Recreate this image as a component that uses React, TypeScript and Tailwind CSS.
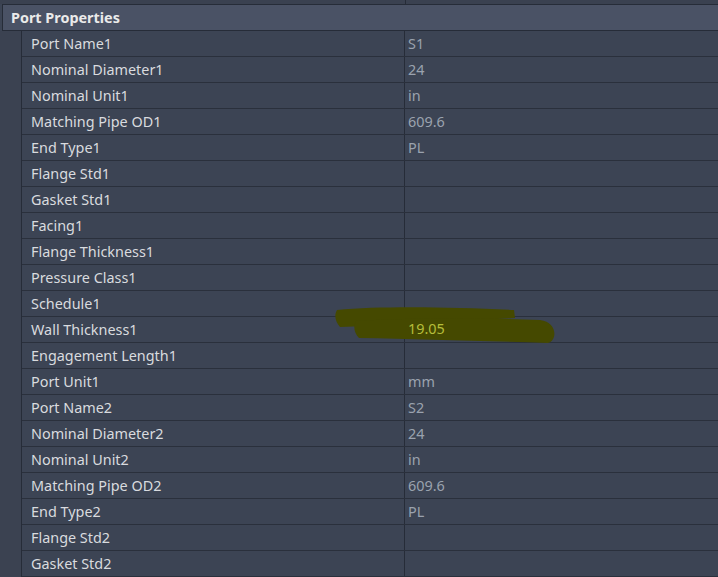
import React from "react";

const rows: [string, string][] = [
  ["Port Name1", "S1"],
  ["Nominal Diameter1", "24"],
  ["Nominal Unit1", "in"],
  ["Matching Pipe OD1", "609.6"],
  ["End Type1", "PL"],
  ["Flange Std1", ""],
  ["Gasket Std1", ""],
  ["Facing1", ""],
  ["Flange Thickness1", ""],
  ["Pressure Class1", ""],
  ["Schedule1", ""],
  ["Wall Thickness1", ""],
  ["Engagement Length1", ""],
  ["Port Unit1", "mm"],
  ["Port Name2", "S2"],
  ["Nominal Diameter2", "24"],
  ["Nominal Unit2", "in"],
  ["Matching Pipe OD2", "609.6"],
  ["End Type2", "PL"],
  ["Flange Std2", ""],
  ["Gasket Std2", ""],
];

export default function App() {
  return (
    <div
      className="relative w-[718px] h-[577px] overflow-hidden bg-[#3c4454] text-[14.4px]"
      style={{ fontFamily: '"Segoe UI", "Noto Sans", "Open Sans", sans-serif' }}
    >
      <div className="flex h-[4px] bg-[#3a4150]">
        <div className="w-[405px] h-full" />
        <div className="w-px h-full bg-[#262c38]" />
      </div>
      <div className="h-[27px] ml-[2px] border-t border-l border-b border-[#262c38] bg-[#4a5265] flex items-center pl-[8px] font-bold text-[#eaeaea]">
        Port Properties
      </div>
      <div className="flex">
        <div className="w-[22px] shrink-0 bg-[#3b4251] border-r border-[#262c38]" />
        <div className="flex-1">
          {rows.map(([k, v], i) => (
            <div key={i} className="flex h-[26px] border-b border-[#2a303c]">
              <div className="w-[382px] shrink-0 pl-[9px] flex items-center text-[#d9dbdf]">{k}</div>
              <div className="w-px bg-[#262c38]" />
              <div className="flex-1 pl-[3px] flex items-center text-[#9aa2ae]">{v}</div>
            </div>
          ))}
        </div>
      </div>
      <svg className="absolute left-0 top-0 pointer-events-none" width="718" height="577">
        <path
          d="M337 310 C 380 306, 450 307, 514 310 L 515 318 C 470 321, 420 324, 340 327 C 335 321, 334 315, 337 310 Z"
          fill="#454900"
        />
        <path
          d="M356 321 C 420 317, 480 318, 540 320 C 557 322, 558 340, 548 343 C 480 341, 420 339, 359 338 C 354 333, 353 326, 356 321 Z"
          fill="#454900"
        />
      </svg>
      <div className="absolute left-[408px] top-[316px] h-[26px] flex items-center text-[#b5bd3a]">
        19.05
      </div>
    </div>
  );
}
